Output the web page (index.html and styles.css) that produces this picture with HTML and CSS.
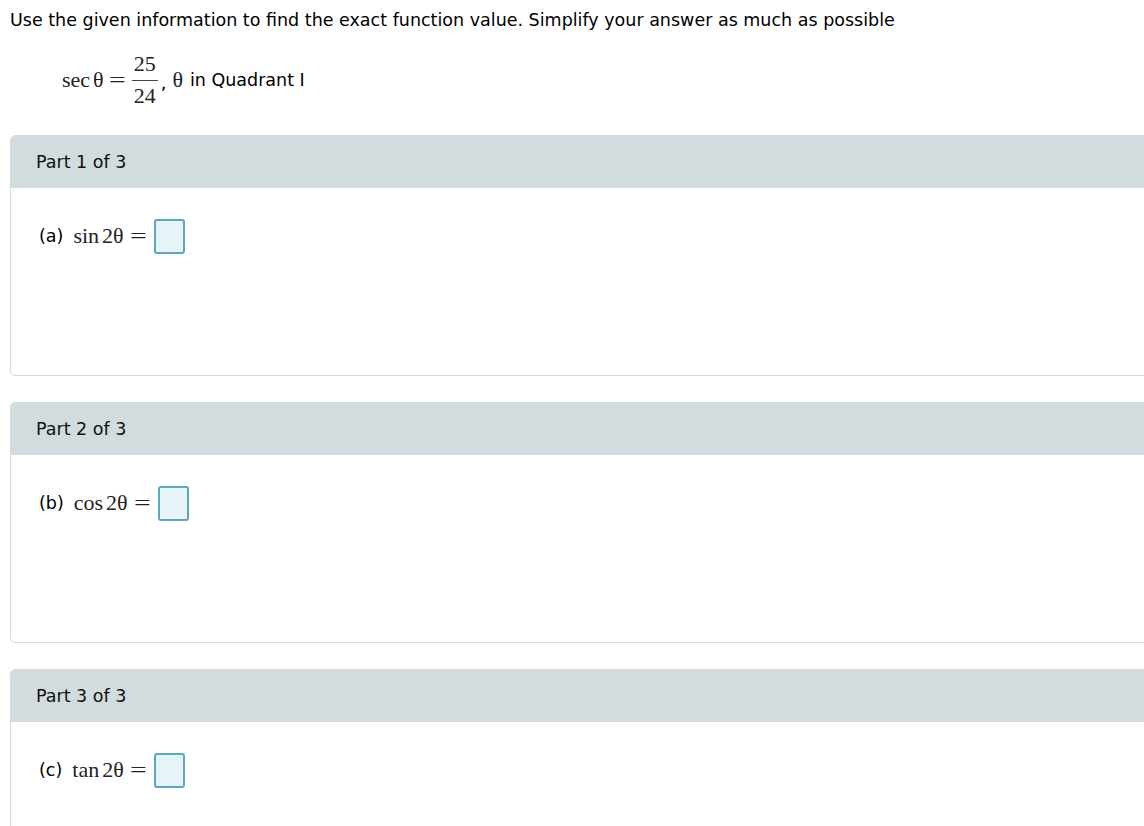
FILE: index.html
```html
<!DOCTYPE html>
<html>
<head>
<meta charset="utf-8">
<link rel="stylesheet" href="styles.css">
</head>
<body>
<div class="page">
  <p class="intro">Use the given information to find the exact function value. Simplify your answer as much as possible</p>
  <div class="given">
    <span class="math">sec<span class="sp"></span>θ<span class="eq">=</span></span>
    <span class="frac"><span class="num">25</span><span class="den">24</span></span><span class="comma">,</span>
    <span class="math theta">θ</span><span class="txt">in Quadrant I</span>
  </div>

  <div class="card">
    <div class="card-head">Part 1 of 3</div>
    <div class="card-body">
      <div class="question"><span class="label">(a)</span><span class="math">sin<span class="sp"></span>2θ<span class="eq">=</span></span><span class="answer"></span></div>
    </div>
  </div>

  <div class="card">
    <div class="card-head">Part 2 of 3</div>
    <div class="card-body">
      <div class="question"><span class="label">(b)</span><span class="math">cos<span class="sp"></span>2θ<span class="eq">=</span></span><span class="answer"></span></div>
    </div>
  </div>

  <div class="card">
    <div class="card-head">Part 3 of 3</div>
    <div class="card-body">
      <div class="question"><span class="label">(c)</span><span class="math">tan<span class="sp"></span>2θ<span class="eq">=</span></span><span class="answer"></span></div>
    </div>
  </div>
</div>
</body>
</html>
```
FILE: styles.css
```css
html, body {
  margin: 0;
  padding: 0;
  background: #ffffff;
  overflow: hidden;
}
body {
  font-family: "DejaVu Sans", Verdana, sans-serif;
  color: #000;
}
.page {
  padding: 0 0 0 10px;
}
.intro {
  margin: 0;
  padding-top: 10px;
  font-size: 17.5px;
  line-height: 21px;
  white-space: nowrap;
}
.given {
  display: flex;
  align-items: center;
  height: 60px;
  margin-top: 19px;
  padding-left: 52px;
}
.math {
  font-family: "Liberation Serif", "Times New Roman", serif;
  font-size: 22px;
  color: #222;
}
.sp {
  display: inline-block;
  width: 3px;
}
.eq {
  display: inline-block;
  width: 12px;
  margin: 0 8px 0 8px;
  transform: scaleX(1.35);
}
.given .eq {
  margin-left: 7px;
  margin-right: 8px;
}
.frac {
  display: inline-flex;
  flex-direction: column;
  align-items: center;
  font-family: "Liberation Serif", "Times New Roman", serif;
  font-size: 22px;
  color: #222;
  line-height: 22px;
  padding: 0 1px;
}
.num {
  border-bottom: 1px solid #444;
  padding: 0 2px 5px;
}
.den {
  padding: 4px 2px 0;
}
.comma {
  font-size: 18px;
  align-self: center;
  margin-top: 4px;
  margin-left: 2px;
  margin-right: 6px;
}
.theta {
  margin-right: 7px;
}
.txt {
  font-size: 17.5px;
}
.card {
  margin-top: 26px;
  margin-right: -20px;
  border: 1px solid #d3dcdf;
  border-radius: 5px;
  height: 241px;
  box-sizing: border-box;
  overflow: hidden;
}
.given + .card {
  margin-top: 25px;
}
.card-head {
  background: #d2dbde;
  height: 52px;
  display: flex;
  align-items: center;
  padding-left: 25px;
  font-size: 17.5px;
  color: #111;
}
.card-body {
  padding: 30px 0 0 28px;
}
.question {
  display: flex;
  align-items: center;
  height: 36px;
}
.label {
  font-size: 17.5px;
  margin-right: 10px;
}
.answer {
  display: inline-block;
  width: 27px;
  height: 31px;
  margin-left: 2px;
  border: 2px solid #5ba9b8;
  border-radius: 3px;
  background: #e6f4f8;
}
```
